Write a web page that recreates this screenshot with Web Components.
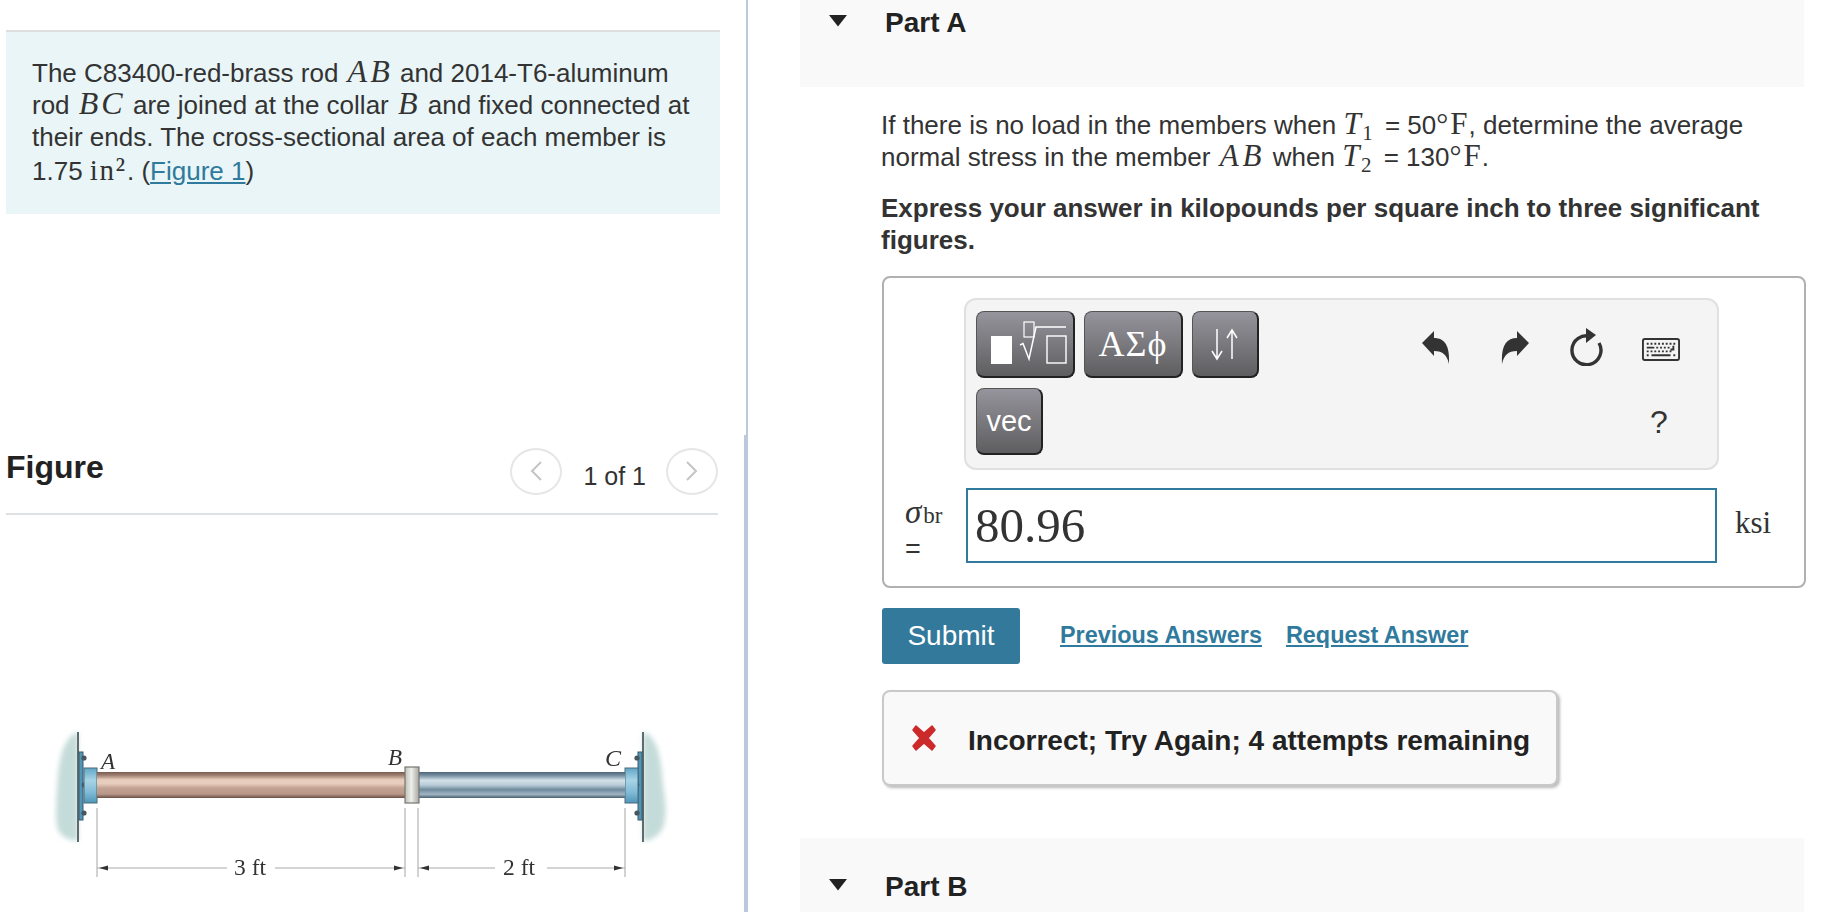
<!DOCTYPE html>
<html><head><meta charset="utf-8">
<style>
html,body{margin:0;padding:0;background:#fff;width:1838px;height:912px;overflow:hidden;font-family:"Liberation Sans",Arial,sans-serif;color:#333}
</style></head><body>
<app-page></app-page>
<template id="t-page">
<style>
:host{display:flex;width:1838px;height:912px;overflow:hidden}
.left{width:744px;flex:none;box-sizing:border-box;padding:30px 24px 0 6px}
.div{width:4px;flex:none;background:linear-gradient(#bcc9dd,#bcc9dd) right top/2px 100% no-repeat,linear-gradient(#bcc9dd,#bcc9dd) left 435px/2px 100% no-repeat}
.right{flex:1;min-width:0;box-sizing:border-box;padding:0 34px 0 52px}
.gap1{height:232px}
</style>
<div class="left">
<info-box></info-box>
<div class="gap1"></div>
<figure-head></figure-head>
<rod-figure></rod-figure>
</div>
<div class="div"></div>
<div class="right">
<part-head label="Part A" h="87" tx="7" ar="14"></part-head>
<question-text></question-text>
<answer-box></answer-box>
<action-row></action-row>
<feedback-box></feedback-box>
<part-head label="Part B" h="74" top="52" tx="33" ar="40"></part-head>
</div>
</template>

<template id="t-info">
<style>
:host{display:block;background:#e9f5f7;border-top:2px solid #dedede;box-sizing:border-box;height:184px;padding:25px 0 0 26px;font-size:26px;line-height:32px;color:#333;white-space:nowrap}
i,.m{font-family:"Liberation Serif",serif;font-size:32px;line-height:0;color:#333}
i{letter-spacing:3px;margin-left:2px}
.m{font-size:29px;letter-spacing:1.5px}
.sq{font-family:"Liberation Serif",serif;font-size:32px;line-height:0;letter-spacing:2px}
.l4{margin-top:2px}
a{color:#2f7a9d;text-decoration:underline}
</style>
<div>The C83400-red-brass rod <i>AB</i> and 2014-T6-aluminum</div>
<div>rod <i>BC</i> are joined at the collar <i>B</i> and fixed connected at</div>
<div>their ends. The cross-sectional area of each member is</div>
<div class="l4">1.75 <span class="m">in</span><span class="sq">²</span>. (<a>Figure 1</a>)</div>
</template>

<template id="t-fighead">
<style>
:host{display:flex;align-items:center;height:69px;box-sizing:border-box;border-bottom:2px solid #dfe2e4;width:712px;padding-bottom:10px}
.t{font-weight:700;font-size:32px;color:#222;flex:1;padding-bottom:14px}
.c{width:52px;height:47px;margin-bottom:7px;box-sizing:border-box;border:2px solid #e6e6e6;border-radius:50%;display:flex;align-items:center;justify-content:center;flex:none}
.n{font-size:25px;color:#333;margin:0 20px 0 21px;position:relative;top:2px}
svg{display:block}
</style>
<div class="t">Figure</div>
<div class="c"><svg width="14" height="24" viewBox="0 0 14 24"><path d="M12 3 3 12l9 9" fill="none" stroke="#c4c4c4" stroke-width="2"/></svg></div>
<div class="n">1 of 1</div>
<div class="c"><svg width="14" height="24" viewBox="0 0 14 24"><path d="M2 3l9 9-9 9" fill="none" stroke="#c4c4c4" stroke-width="2"/></svg></div>
</template>

<template id="t-rod">
<style>
:host{display:block;width:712px;height:397px}
svg{display:block}
text{font-family:"Liberation Serif",serif}
</style>
<svg width="712" height="397" viewBox="6 515 712 397">
<defs>
<linearGradient id="cu" x1="0" y1="0" x2="0" y2="1">
<stop offset="0" stop-color="#7a5c50"/><stop offset=".12" stop-color="#9b7c6e"/><stop offset=".3" stop-color="#e8cdbc"/><stop offset=".45" stop-color="#e6cdbd"/><stop offset=".62" stop-color="#c4a292"/><stop offset=".85" stop-color="#b8978a"/><stop offset="1" stop-color="#6a4e44"/>
</linearGradient>
<linearGradient id="al" x1="0" y1="0" x2="0" y2="1">
<stop offset="0" stop-color="#4f6575"/><stop offset=".12" stop-color="#6f8a9c"/><stop offset=".32" stop-color="#d3e1e8"/><stop offset=".5" stop-color="#b9ccd8"/><stop offset=".68" stop-color="#6f8a9c"/><stop offset=".86" stop-color="#a0b5c3"/><stop offset="1" stop-color="#4a5f6e"/>
</linearGradient>
<linearGradient id="col" x1="0" y1="0" x2="1" y2="0">
<stop offset="0" stop-color="#c0c0ba"/><stop offset=".45" stop-color="#eeeeea"/><stop offset="1" stop-color="#a8a8a2"/>
</linearGradient>
<linearGradient id="fl" x1="0" y1="0" x2="0" y2="1">
<stop offset="0" stop-color="#5fa6c6"/><stop offset=".35" stop-color="#a8d4e6"/><stop offset=".7" stop-color="#7fbad6"/><stop offset="1" stop-color="#4f96b8"/>
</linearGradient>
<filter id="sb" x="-30%" y="-10%" width="160%" height="120%"><feGaussianBlur stdDeviation="2.5"/></filter>
<filter id="s1" x="-2%" y="-5%" width="104%" height="110%"><feGaussianBlur stdDeviation=".5"/></filter>
</defs>
<path d="M78 732C66 736 60 752 58 775 56 800 55 822 58 830 62 838 70 840 78 841Z" fill="#c4dcd9" filter="url(#sb)"/>
<path d="M643 732C655 736 660 750 662 775 663 790 668 805 664 825 660 836 652 840 643 841Z" fill="#c4dcd9" filter="url(#sb)"/>
<g filter="url(#s1)">
<path d="M78 732V842M643 732V842" stroke="#5e6a6c" stroke-width="2" fill="none"/>
<rect x="79" y="752" width="4" height="68" fill="#4f96b8" stroke="#3d5a66" stroke-width="1"/>
<circle cx="84" cy="758" r="2.6" fill="#48565c"/><circle cx="84" cy="785" r="2.4" fill="#48565c"/><circle cx="84" cy="813" r="2.6" fill="#48565c"/>
<rect x="84" y="768" width="13" height="35" fill="url(#fl)" stroke="#4a6b7a" stroke-width="1"/>
<rect x="638" y="752" width="4" height="68" fill="#4f96b8" stroke="#3d5a66" stroke-width="1"/>
<circle cx="637" cy="758" r="2.6" fill="#48565c"/><circle cx="637" cy="785" r="2.4" fill="#48565c"/><circle cx="637" cy="813" r="2.6" fill="#48565c"/>
<rect x="625" y="768" width="13" height="35" fill="url(#fl)" stroke="#4a6b7a" stroke-width="1"/>
<rect x="97" y="772" width="308" height="26" fill="url(#cu)"/>
<rect x="419" y="772" width="206" height="26" fill="url(#al)"/>
<rect x="405" y="767" width="14" height="36" fill="url(#col)" stroke="#77766f" stroke-width="1.2"/>
<g stroke="#aaa" stroke-width="1.2" fill="none">
<path d="M97 808V877M405 808V877M418 808V877M625 808V877" stroke="#b5b5b5"/>
<path d="M97 868H227M275 868H405M418 868H495M547 868H625"/>
</g>
<path d="M99 868l9-2.6v5.2ZM403 868l-9-2.6v5.2ZM420 868l9-2.6v5.2ZM623 868l-9-2.6v5.2Z" fill="#333"/>
</g>
<g fill="#333" filter="url(#s1)">
<text x="101" y="769" font-size="23" font-style="italic">A</text>
<text x="388" y="765" font-size="23" font-style="italic">B</text>
<text x="605" y="766" font-size="24" font-style="italic">C</text>
<text x="234" y="875" font-size="23.5">3 ft</text>
<text x="503" y="875" font-size="23.5">2 ft</text>
</g>
</svg>
</template>

<template id="t-part">
<style>
:host{display:block;background:#f9f9f9;box-sizing:border-box;position:relative;font-weight:700;font-size:28px;color:#222}
.row{display:flex;align-items:flex-start}
svg{display:block;margin:14px 0 0 28px}
span{margin-left:37px;display:block}
</style>
<div class="row"><svg id="a" width="20" height="13" viewBox="0 0 20 13"><path d="M1 1h18L10 12.5Z" fill="#222"/></svg><span id="l"></span></div>
</template>

<template id="t-q">
<style>
:host{display:block;padding:22px 0 0 81px;font-size:26px;line-height:32px;color:#333;white-space:nowrap}
i,.r,.d{font-family:"Liberation Serif",serif;font-size:31px;line-height:0}
i{letter-spacing:1.5px}
i.ab{letter-spacing:4px;margin-left:2px}
.r{font-size:31px;letter-spacing:1px}
.d{font-size:30px;letter-spacing:2px}
sub{font-family:"Liberation Serif",serif;font-size:21px;line-height:0;vertical-align:-6px;margin-right:5px}
b{display:block;margin-top:19px;white-space:normal;width:920px;color:#333}
</style>
<div>If there is no load in the members when <i>T</i><sub>1</sub> = 50<span class="d">°</span><span class="r">F</span>, determine the average</div>
<div>normal stress in the member <i class="ab">AB</i> when <i>T</i><sub>2</sub> = 130<span class="d">°</span><span class="r">F</span>.</div>
<b>Express your answer in kilopounds per square inch to three significant figures.</b>
</template>

<template id="t-ans">
<style>
:host{display:block;box-sizing:border-box;margin:20px 0 0 82px;width:924px;height:312px;border:2px solid #b0b0b0;border-radius:8px;padding:20px 0 0 80px;background:#fff}
.tb{width:755px;height:172px;box-sizing:border-box;border:2px solid #e0e0e0;border-radius:12px;background:#f4f4f4;padding:11px 10px 0 10px;display:grid;grid-template-columns:99px 99px 67px 1fr;grid-template-rows:67px 67px;column-gap:9px;row-gap:10px;position:relative}
.btn{box-sizing:border-box;border-radius:8px;background:linear-gradient(#96949c,#5e5e60);border:1px solid #555;border-bottom:2px solid #222;border-right:2px solid #222;color:#fff;display:flex;align-items:center;justify-content:center;font-size:29px}
.s{font-family:"Liberation Serif",serif;font-size:36px;letter-spacing:1px}
.ic{position:absolute}
.q{position:absolute;font-size:32px;color:#333;left:684px;top:104px}
.row{display:flex;margin:18px 0 0 -80px;align-items:flex-start}
.lbl{width:82px;flex:none;box-sizing:border-box;font-family:"Liberation Serif",serif;color:#333;padding:8px 0 0 21px;line-height:1;white-space:nowrap}
.lbl .g{font-style:italic;font-size:33px;letter-spacing:2px}
.lbl .b{font-size:23px}
.lbl .e{display:block;font-size:27px;margin-top:7px;font-family:"Liberation Sans",sans-serif}
.inp{width:751px;height:75px;flex:none;box-sizing:border-box;border:2px solid #2f7a9d;background:#fff;font-family:"Liberation Serif",serif;font-size:49px;line-height:71px;padding-left:7px;color:#333}
.u{font-family:"Liberation Serif",serif;font-size:31px;color:#333;margin:17px 0 0 18px}
</style>
<div class="tb">
<div class="btn"><svg width="96" height="64" viewBox="1 1 96 64"><rect x="15" y="25" width="21" height="28" fill="#fff"/><rect x="48" y="11" width="10" height="15" fill="none" stroke="#fff" stroke-width="1.2"/><path d="M44 34l3-1.5 6 15.5 7-32h30" fill="none" stroke="#fff" stroke-width="1.5"/><rect x="71" y="25" width="19" height="27" fill="none" stroke="#fff" stroke-width="1.4"/></svg></div>
<div class="btn s">ΑΣϕ</div>
<div class="btn"><svg width="32" height="36" viewBox="0 0 32 36"><path d="M8 3v29M3 25l5 8 5-8M23 33V4M18 12l5-8 5 8" fill="none" stroke="#fff" stroke-width="1.5"/></svg></div>
<div></div>
<div class="btn" style="grid-row:2;grid-column:1;width:67px">vec</div>
<svg class="ic" style="left:455px;top:29px" width="30" height="36" viewBox="0 0 30 36"><path d="M1 14 13 2v7c11 0 16 8 15 26-2-9-6-13-15-13v5Z" fill="#333"/></svg>
<svg class="ic" style="left:534px;top:29px" width="30" height="36" viewBox="0 0 30 36"><path d="M29 14 17 2v7C6 9 1 17 2 35c2-9 6-13 15-13v5Z" fill="#333"/></svg>
<svg class="ic" style="left:602px;top:28px" width="36" height="38" viewBox="0 0 36 38"><path d="M23 8.5A14.5 14.5 0 1 0 31 15" fill="none" stroke="#333" stroke-width="3.4"/><path d="M18 0l10 7-10 8Z" fill="#333"/></svg>
<svg class="ic" style="left:676px;top:38px" width="38" height="23" viewBox="0 0 40 24"><rect x="1" y="1" width="38" height="22" rx="2" fill="#f4f4f4" stroke="#333" stroke-width="2"/><path d="M5 6h2M9 6h2M13 6h2M17 6h2M21 6h2M25 6h2M29 6h2M33 6h2M5 10h8M15 10h2M19 10h2M23 10h2M27 10h2M33 8v4h-3M5 14h2M9 14h2M13 14h2M17 14h2M21 14h2M25 14h2M29 14h2M5 18h2M10 18h20M33 18h2" stroke="#333" stroke-width="2" fill="none"/></svg>
<div class="q">?</div>
</div>
<div class="row">
<div class="lbl"><span class="g">σ</span><span class="b">br</span><span class="e">=</span></div>
<div class="inp">80.96</div>
<div class="u">ksi</div>
</div>
</template>

<template id="t-act">
<style>
:host{display:flex;align-items:flex-start;margin:20px 0 0 82px}
.s{width:138px;height:56px;background:#33799b;color:#fff;border-radius:3px;font-size:28px;display:flex;align-items:center;justify-content:center}
a{color:#2f7a9d;font-weight:700;font-size:23.4px;text-decoration:underline;margin-top:14px}
.a1{margin-left:40px}.a2{margin-left:24px}
</style>
<div class="s">Submit</div>
<a class="a1">Previous Answers</a><a class="a2">Request Answer</a>
</template>

<template id="t-fb">
<style>
:host{display:flex;align-items:center;box-sizing:border-box;margin:26px 0 0 82px;width:676px;height:96px;background:#f9f9f9;border:2px solid #c9c9c9;border-radius:8px;box-shadow:2px 2px 3px #bbb;padding-left:26px;font-weight:700;font-size:28px;color:#222}
svg{display:block;margin-right:30px;flex:none}
span{margin-top:6px}
</style>
<svg width="28" height="28" viewBox="0 0 28 28"><path d="M3 6l3-4 8 7 8-7 3 4-7 8 7 8-3 4-8-7-8 7-3-4 7-8Z" fill="#cc2a2a" stroke="#cc2a2a" stroke-width="1.5" stroke-linejoin="round"/></svg>
<span>Incorrect; Try Again; 4 attempts remaining</span>
</template>

<script>
function def(name,tid,init){
  customElements.define(name,class extends HTMLElement{
    constructor(){super();const r=this.attachShadow({mode:"open"});r.appendChild(document.getElementById(tid).content.cloneNode(true));}
    connectedCallback(){if(init)init.call(this,this.shadowRoot);}
  });
}
def("app-page","t-page");
def("info-box","t-info");
def("figure-head","t-fighead");
def("rod-figure","t-rod");
def("part-head","t-part",function(r){
  const l=r.getElementById("l");
  l.textContent=this.getAttribute("label");
  l.style.marginTop=this.getAttribute("tx")+"px";
  r.getElementById("a").style.marginTop=this.getAttribute("ar")+"px";
  this.style.height=this.getAttribute("h")+"px";
  if(this.hasAttribute("top"))this.style.marginTop=this.getAttribute("top")+"px";
});
def("question-text","t-q");
def("answer-box","t-ans");
def("action-row","t-act");
def("feedback-box","t-fb");
</script>
</body></html>
